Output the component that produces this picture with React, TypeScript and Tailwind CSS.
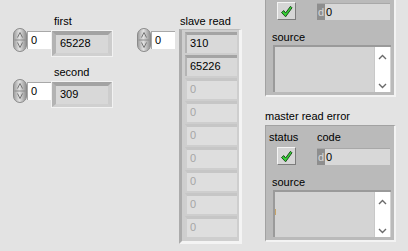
import React from "react";

const font = { fontFamily: '"Liberation Sans", Arial, sans-serif' };

function Pill() {
  return (
    <svg width="14" height="24" viewBox="0 0 14 24">
      <defs>
        <linearGradient id="pg" x1="0" x2="1" y1="0" y2="0">
          <stop offset="0" stopColor="#9c9c9c" />
          <stop offset="0.45" stopColor="#e2e2e2" />
          <stop offset="1" stopColor="#8e8e8e" />
        </linearGradient>
      </defs>
      <rect x="0.5" y="0.5" width="13" height="23" rx="6.5" fill="url(#pg)" stroke="#8a8a8a" />
      <line x1="1.5" y1="12" x2="12.5" y2="12" stroke="#8c8c8c" />
      <path d="M4.5 9.5 L7 4.5 L9.5 9.5" fill="none" stroke="#6c6c6c" strokeWidth="0.9" />
      <path d="M4.5 14.5 L7 19.5 L9.5 14.5" fill="none" stroke="#6c6c6c" strokeWidth="0.9" />
    </svg>
  );
}

function NumCtl() {
  return (
    <div className="flex items-center">
      <Pill />
      <div className="w-[24px] h-[18px] bg-white border-t border-l border-[#a8a8a8] text-[11px] leading-[16px] pl-[3px] text-black">
        0
      </div>
    </div>
  );
}

function Indicator({ value }: { value: string }) {
  return (
    <div className="w-[60px] h-[25px] bg-[#c4c4c4] border-t-[4px] border-t-[#a3a3a3] border-l-[4px] border-l-[#b3b3b3] border-r-[4px] border-r-[#cdcdcd] border-b-[3px] border-b-[#d0d0d0] outline outline-1 outline-[#f2f2f2]">
      <div className="h-full bg-[#d8d8d8] text-[11px] leading-[17px] pl-[4px] text-black">{value}</div>
    </div>
  );
}

function ArrElem({ value, active }: { value: string; active: boolean }) {
  return (
    <div
      className={
        active
          ? "h-[21px] border-t-[3px] border-t-[#a4a4a4] border-l-[2px] border-l-[#b4b4b4] bg-[#d9d9d9] text-[11px] leading-[17px] pl-[3px] text-black"
          : "h-[21px] border-t-[3px] border-t-[#c6c6c6] border-l-[2px] border-l-[#cfcfcf] bg-[#dedede] text-[11px] leading-[17px] pl-[3px] text-[#a6a6a6]"
      }
    >
      {value}
    </div>
  );
}

function Check() {
  return (
    <div className="w-[19px] h-[18px] bg-[#d6d6d6] border border-t-[#f4f4f4] border-l-[#f4f4f4] border-r-[#7c7c7c] border-b-[#7c7c7c] flex items-center justify-center">
      <svg width="13" height="13" viewBox="0 0 13 13">
        <path d="M1.5 7.5 L3.8 5.6 L5.6 8 L10.5 1.3 L12 2.8 L5.6 11.8 Z" fill="#35d035" stroke="#1f4f1f" strokeWidth="1" strokeLinejoin="round" />
      </svg>
    </div>
  );
}

function Cluster({ showLabels, mark }: { showLabels: boolean; mark: boolean }) {
  return (
    <div className="w-[131px] h-[117px] bg-[#bababa] border-l border-t border-[#a2a2a2] border-r-[2px] border-r-[#f3f3f3] border-b-[2px] border-b-[#f3f3f3] flex flex-col pl-[3px] pt-[5px] text-[11px] leading-[13px] text-black">
      <div className="flex h-[13px]">
        {showLabels && <div className="w-[48px]">status</div>}
        {showLabels && <div>code</div>}
      </div>
      <div className="flex items-start mt-[3px]">
        <div className="ml-[8px]">
          <Check />
        </div>
        <div className="ml-[21px] mt-[1px] w-[73px] h-[17px] flex bg-[#d8d8d8] border-t border-[#a8a8a8]">
          <div className="w-[8px] bg-[#8e8e8e] text-[#d8d8d8] leading-[16px] text-center">d</div>
          <div className="pl-[1px] leading-[16px]">0</div>
        </div>
      </div>
      <div className="mt-[11px] ml-[3px]">source</div>
      <div className="relative mt-[1px] ml-[4px] w-[118px] h-[47px] bg-[#d4d4d4] border-t-[2px] border-l-[2px] border-[#9a9a9a] flex justify-end">
        {mark && <div className="absolute left-[0px] top-[17px] w-[1px] h-[6px] bg-[#c8a468]" />}
        <div className="relative w-[16px] h-full bg-white border-l border-[#c8c8c8] mr-[1px]">
          <svg className="absolute left-[3px] top-[7px]" width="9" height="6" viewBox="0 0 9 6">
            <path d="M1 5 L4.5 1.5 L8 5" fill="none" stroke="#6a6a6a" strokeWidth="1.4" />
          </svg>
          <svg className="absolute left-[3px] bottom-[3px]" width="9" height="6" viewBox="0 0 9 6">
            <path d="M1 1 L4.5 4.5 L8 1" fill="none" stroke="#6a6a6a" strokeWidth="1.4" />
          </svg>
        </div>
      </div>
    </div>
  );
}

export default function App() {
  return (
    <div className="relative w-[408px] h-[251px] bg-[#e3e3e3] overflow-hidden" style={font}>
      {/* first */}
      <div className="absolute left-[54px] top-[15px] text-[11px] leading-[13px] text-black">first</div>
      <div className="absolute left-[13px] top-[28px]">
        <NumCtl />
      </div>
      <div className="absolute left-[52px] top-[31px]">
        <Indicator value="65228" />
      </div>

      {/* second */}
      <div className="absolute left-[54px] top-[66px] text-[11px] leading-[13px] text-black">second</div>
      <div className="absolute left-[13px] top-[79px]">
        <NumCtl />
      </div>
      <div className="absolute left-[52px] top-[82px]">
        <Indicator value="309" />
      </div>

      {/* slave read array */}
      <div className="absolute left-[180px] top-[15px] text-[11px] leading-[13px] text-black">slave read</div>
      <div className="absolute left-[137px] top-[28px]">
        <NumCtl />
      </div>
      <div className="absolute left-[179px] top-[29px] w-[63px] h-[215px] bg-[#cecece] border-l-[3px] border-l-[#ababab] border-t border-t-[#bcbcbc] border-r-[3px] border-r-[#f4f4f4] border-b-[3px] border-b-[#f4f4f4] flex flex-col gap-[2px] pt-[2px] pl-[3px] pr-[2px]">
        <ArrElem value="310" active />
        <ArrElem value="65226" active />
        <ArrElem value="0" active={false} />
        <ArrElem value="0" active={false} />
        <ArrElem value="0" active={false} />
        <ArrElem value="0" active={false} />
        <ArrElem value="0" active={false} />
        <ArrElem value="0" active={false} />
        <ArrElem value="0" active={false} />
      </div>

      {/* error clusters */}
      <div className="absolute left-[265px] top-[-20px]">
        <Cluster showLabels={false} mark={false} />
      </div>
      <div className="absolute left-[265px] top-[110px] text-[11px] leading-[13px] text-black">master read error</div>
      <div className="absolute left-[265px] top-[125px]">
        <Cluster showLabels mark />
      </div>
    </div>
  );
}
